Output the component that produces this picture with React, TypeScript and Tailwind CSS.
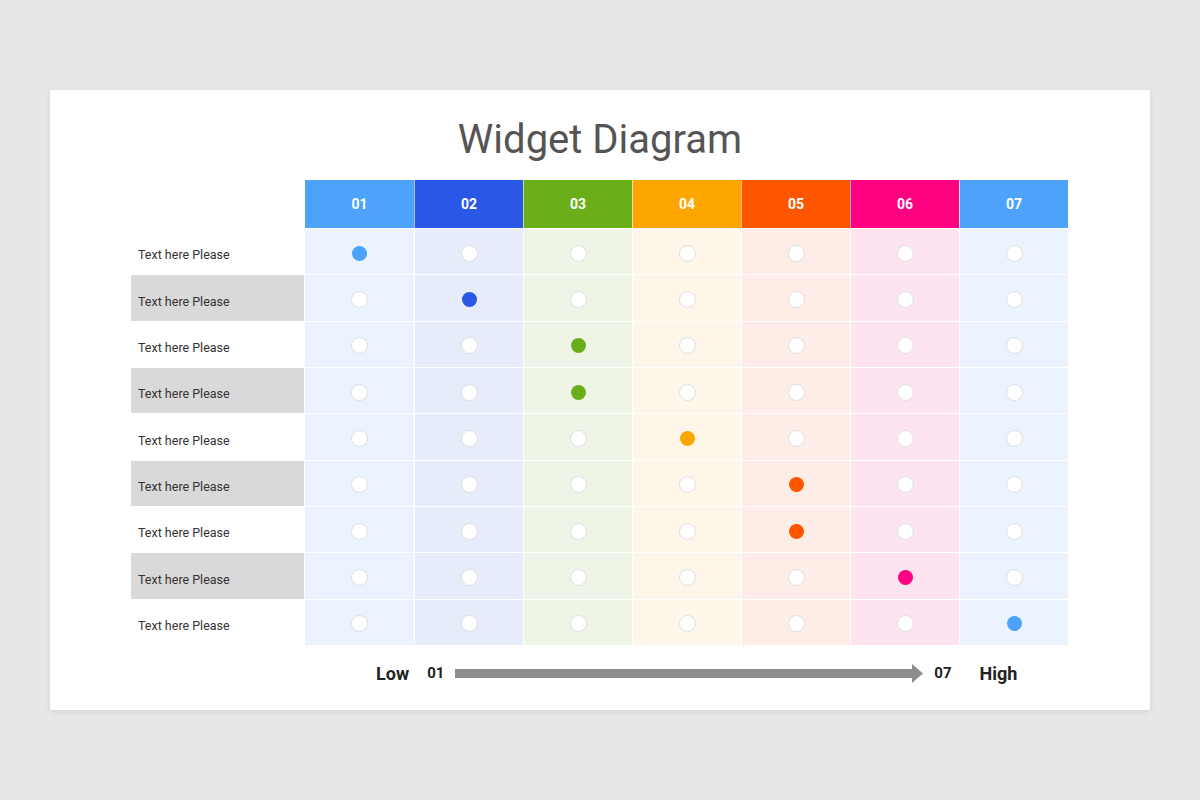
const columns = [
  { id: "01", head: "bg-[#4da3fa]", cell: "bg-[#eaf3fe]", dot: "bg-[#4da3fa]" },
  { id: "02", head: "bg-[#2b57e6]", cell: "bg-[#e7ecfb]", dot: "bg-[#2b57e6]" },
  { id: "03", head: "bg-[#6aaf19]", cell: "bg-[#eef5e6]", dot: "bg-[#6aaf19]" },
  { id: "04", head: "bg-[#fea600]", cell: "bg-[#fef6e8]", dot: "bg-[#fea600]" },
  { id: "05", head: "bg-[#fe5600]", cell: "bg-[#fdede6]", dot: "bg-[#fe5600]" },
  { id: "06", head: "bg-[#fe0080]", cell: "bg-[#fde4f0]", dot: "bg-[#fe0080]" },
  { id: "07", head: "bg-[#4da3fa]", cell: "bg-[#eaf3fe]", dot: "bg-[#4da3fa]" },
];

// which column is filled for each row
const picks = [0, 1, 2, 2, 3, 4, 4, 5, 6];

function Dot({ filled, color }: { filled: boolean; color: string }) {
  if (filled) {
    return <span className={`block h-[15px] w-[15px] rounded-full ${color}`} />;
  }
  return <span className="block h-[17px] w-[17px] rounded-full border border-[#dedede] bg-white" />;
}

export default function App() {
  return (
    <div
      className="h-[800px] w-[1200px] bg-[#e8e6e8] pt-[90px]"
      style={{ fontFamily: "Roboto, 'Liberation Sans', sans-serif" }}
    >
      <div className="mx-auto h-[620px] w-[1100px] bg-white pt-[90px] shadow-[0_2px_6px_rgba(0,0,0,0.08)] relative">
        <h1 className="absolute left-0 right-0 top-[22px] text-center text-[40px] font-normal leading-[56px] text-[#555555]">
          Widget Diagram
        </h1>

        <div className="ml-[81px] flex flex-col">
          {/* header */}
          <div className="flex h-[48px]">
            <div className="w-[174px]" />
            {columns.map((c, i) => (
              <div
                key={c.id}
                className={`flex w-[109px] items-center justify-center text-[14px] font-bold text-white ${c.head} ${i > 0 ? "border-l border-white/60" : ""}`}
              >
                {c.id}
              </div>
            ))}
          </div>

          {/* rows */}
          {picks.map((pick, r) => (
            <div key={r} className="flex h-[46.33px]">
              <div className="w-[174px] border-t border-white pr-px">
                <div
                  className={`flex h-full items-center pl-[7px] pt-[8px] text-[12.5px] text-[#333333] ${r % 2 === 1 ? "bg-[#d9d9d9]" : ""}`}
                >
                  Text here Please
                </div>
              </div>
              {columns.map((c, i) => (
                <div
                  key={c.id}
                  className={`flex w-[109px] items-center justify-center border-t border-white pt-[3px] ${c.cell} ${i > 0 ? "border-l" : ""}`}
                >
                  <Dot filled={pick === i} color={c.dot} />
                </div>
              ))}
            </div>
          ))}
        </div>

        {/* scale */}
        <div className="mt-[15px] flex items-center pl-[326px] text-[#222222]">
          <span className="text-[18px] font-bold">Low</span>
          <span className="ml-[18px] text-[15px] font-bold">01</span>
          <div className="ml-[11px] flex items-center">
            <div className="h-[9px] w-[457px] bg-[#8d8d8d]" />
            <svg width="11" height="19" viewBox="0 0 11 19" className="block">
              <polygon points="0,0 11,9.5 0,19" fill="#8d8d8d" />
            </svg>
          </div>
          <span className="ml-[11px] text-[15px] font-bold">07</span>
          <span className="ml-[28px] text-[18px] font-bold">High</span>
        </div>
      </div>
    </div>
  );
}
